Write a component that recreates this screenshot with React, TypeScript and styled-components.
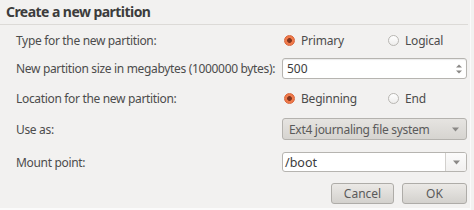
import styled, { createGlobalStyle } from "styled-components";

const GlobalStyle = createGlobalStyle`
  html, body {
    margin: 0;
    padding: 0;
    background: #f2f1f0;
  }
  body {
    font-family: "Noto Sans", "DejaVu Sans", sans-serif;
    color: #4c4c4c;
  }
`;

export default function App() {
  return (
    <>
      <GlobalStyle />
      <Dialog>
        <Header>
          <Title>Create a new partition</Title>
        </Header>
        <Body>
          <Row $h={22} $top={4}>
            <Label>Type for the new partition:</Label>
            <Control>
              <RadioGroup>
                <Radio checked label="Primary" width={104} />
                <Radio label="Logical" />
              </RadioGroup>
            </Control>
          </Row>
          <Row $h={21} $top={7}>
            <Label>New partition size in megabytes (1000000 bytes):</Label>
            <Control>
              <SpinBox>
                <SpinText>500</SpinText>
                <SpinArrows>
                  <svg width="6" height="12" viewBox="0 0 6 12">
                    <path d="M0 4.5 L3 1.5 L6 4.5 Z" fill="#8a8886" />
                    <path d="M0 7.5 L3 10.5 L6 7.5 Z" fill="#8a8886" />
                  </svg>
                </SpinArrows>
              </SpinBox>
            </Control>
          </Row>
          <Row $h={22} $top={8}>
            <Label>Location for the new partition:</Label>
            <Control>
              <RadioGroup>
                <Radio checked label="Beginning" width={104} />
                <Radio label="End" />
              </RadioGroup>
            </Control>
          </Row>
          <Row $h={22} $top={9}>
            <Label>Use as:</Label>
            <Control>
              <ComboButton>
                <span>Ext4 journaling file system</span>
                <DownArrow />
              </ComboButton>
            </Control>
          </Row>
          <Row $h={20} $top={12}>
            <Label>Mount point:</Label>
            <Control>
              <ComboEntry>
                <EntryText>/boot</EntryText>
                <EntryArrow>
                  <DownArrow />
                </EntryArrow>
              </ComboEntry>
            </Control>
          </Row>
          <Actions>
            <Button $w={63}>Cancel</Button>
            <Button $w={65}>OK</Button>
          </Actions>
        </Body>
      </Dialog>
    </>
  );
}

function DownArrow() {
  return (
    <svg width="7" height="5" viewBox="0 0 7 5">
      <path d="M0 0.5 L7 0.5 L3.5 4.5 Z" fill="#8a8886" />
    </svg>
  );
}

function Radio({ checked, label, width }: { checked?: boolean; label: string; width?: number }) {
  return (
    <RadioItem style={width ? { width } : undefined}>
      <RadioCircle $checked={!!checked} />
      <RadioLabel>{label}</RadioLabel>
    </RadioItem>
  );
}

const Dialog = styled.div`
  width: 470px;
  height: 208px;
  background: #f2f1f0;
  border-right: 1px solid #fafafa;
  border-bottom: 2px solid #fbfbfb;
`;

const Header = styled.div`
  height: 24px;
  margin-right: 2px;
  border-bottom: 1px solid #dcdad7;
  display: flex;
  align-items: center;
  padding-left: 6px;
`;

const Title = styled.div`
  font-size: 14px;
  font-weight: 700;
  color: #3c3c3c;
  letter-spacing: -0.55px;
  margin-top: -2px;
`;

const Body = styled.div`
  padding: 0 3px 0 16px;
`;

const Row = styled.div<{ $h: number; $top: number }>`
  display: flex;
  align-items: center;
  height: ${(p) => p.$h}px;
  margin-top: ${(p) => p.$top}px;
`;

const Label = styled.div`
  flex: 1;
  font-size: 12px;
  color: #4c4c4c;
  letter-spacing: -0.33px;
  white-space: nowrap;
`;

const Control = styled.div`
  width: 185px;
  height: 100%;
  display: flex;
  align-items: center;
`;

const RadioGroup = styled.div`
  display: flex;
  align-items: center;
  padding-left: 2px;
`;

const RadioItem = styled.div`
  display: flex;
  align-items: center;
  gap: 6px;
`;

const RadioCircle = styled.span<{ $checked: boolean }>`
  width: 11px;
  height: 11px;
  border-radius: 50%;
  box-sizing: border-box;
  border: 1px solid ${(p) => (p.$checked ? "#d8643a" : "#b8b6b2")};
  background: ${(p) =>
    p.$checked
      ? "radial-gradient(circle, #7e3520 0 2px, #f07a4a 2.8px)"
      : "linear-gradient(#ffffff, #eeedec)"};
`;

const RadioLabel = styled.span`
  font-size: 12px;
  color: #4c4c4c;
  letter-spacing: -0.2px;
`;

const SpinBox = styled.div`
  flex: 1;
  height: 21px;
  box-sizing: border-box;
  border: 1px solid #b6b4b0;
  border-radius: 3px;
  background: #ffffff;
  display: flex;
  align-items: center;
  box-shadow: inset 0 1px 1px rgba(0, 0, 0, 0.08);
`;

const SpinText = styled.span`
  flex: 1;
  padding-left: 4px;
  font-size: 12px;
  color: #3c3c3c;
`;

const SpinArrows = styled.span`
  width: 14px;
  display: flex;
  align-items: center;
  justify-content: center;
`;

const ComboButton = styled.div`
  flex: 1;
  height: 22px;
  box-sizing: border-box;
  border: 1px solid #b4b2ae;
  border-radius: 3px;
  background: linear-gradient(#e6e4e1, #d6d4d0);
  display: flex;
  align-items: center;
  justify-content: space-between;
  padding: 0 7px 0 6px;
  font-size: 12px;
  color: #5a5a5a;
  letter-spacing: -0.3px;
`;

const ComboEntry = styled.div`
  flex: 1;
  height: 20px;
  box-sizing: border-box;
  border: 1px solid #b6b4b0;
  border-radius: 3px;
  background: #ffffff;
  display: flex;
  align-items: stretch;
`;

const EntryText = styled.span`
  flex: 1;
  display: flex;
  align-items: center;
  padding-left: 2px;
  font-size: 12.5px;
  color: #3c3c3c;
`;

const EntryArrow = styled.span`
  width: 20px;
  border-left: 1px solid #d2d0cd;
  display: flex;
  align-items: center;
  justify-content: center;
  background: linear-gradient(#fbfbfb, #f1f0ef);
  border-radius: 0 2px 2px 0;
`;

const Actions = styled.div`
  display: flex;
  justify-content: flex-end;
  gap: 8px;
  margin-top: 11px;
`;

const Button = styled.div<{ $w: number }>`
  width: ${(p) => p.$w}px;
  height: 21px;
  box-sizing: border-box;
  border: 1px solid #aeaca8;
  border-radius: 3px;
  background: linear-gradient(#ebe9e6, #d3d1cd);
  display: flex;
  align-items: center;
  justify-content: center;
  font-size: 12px;
  color: #5a5a5a;
`;
